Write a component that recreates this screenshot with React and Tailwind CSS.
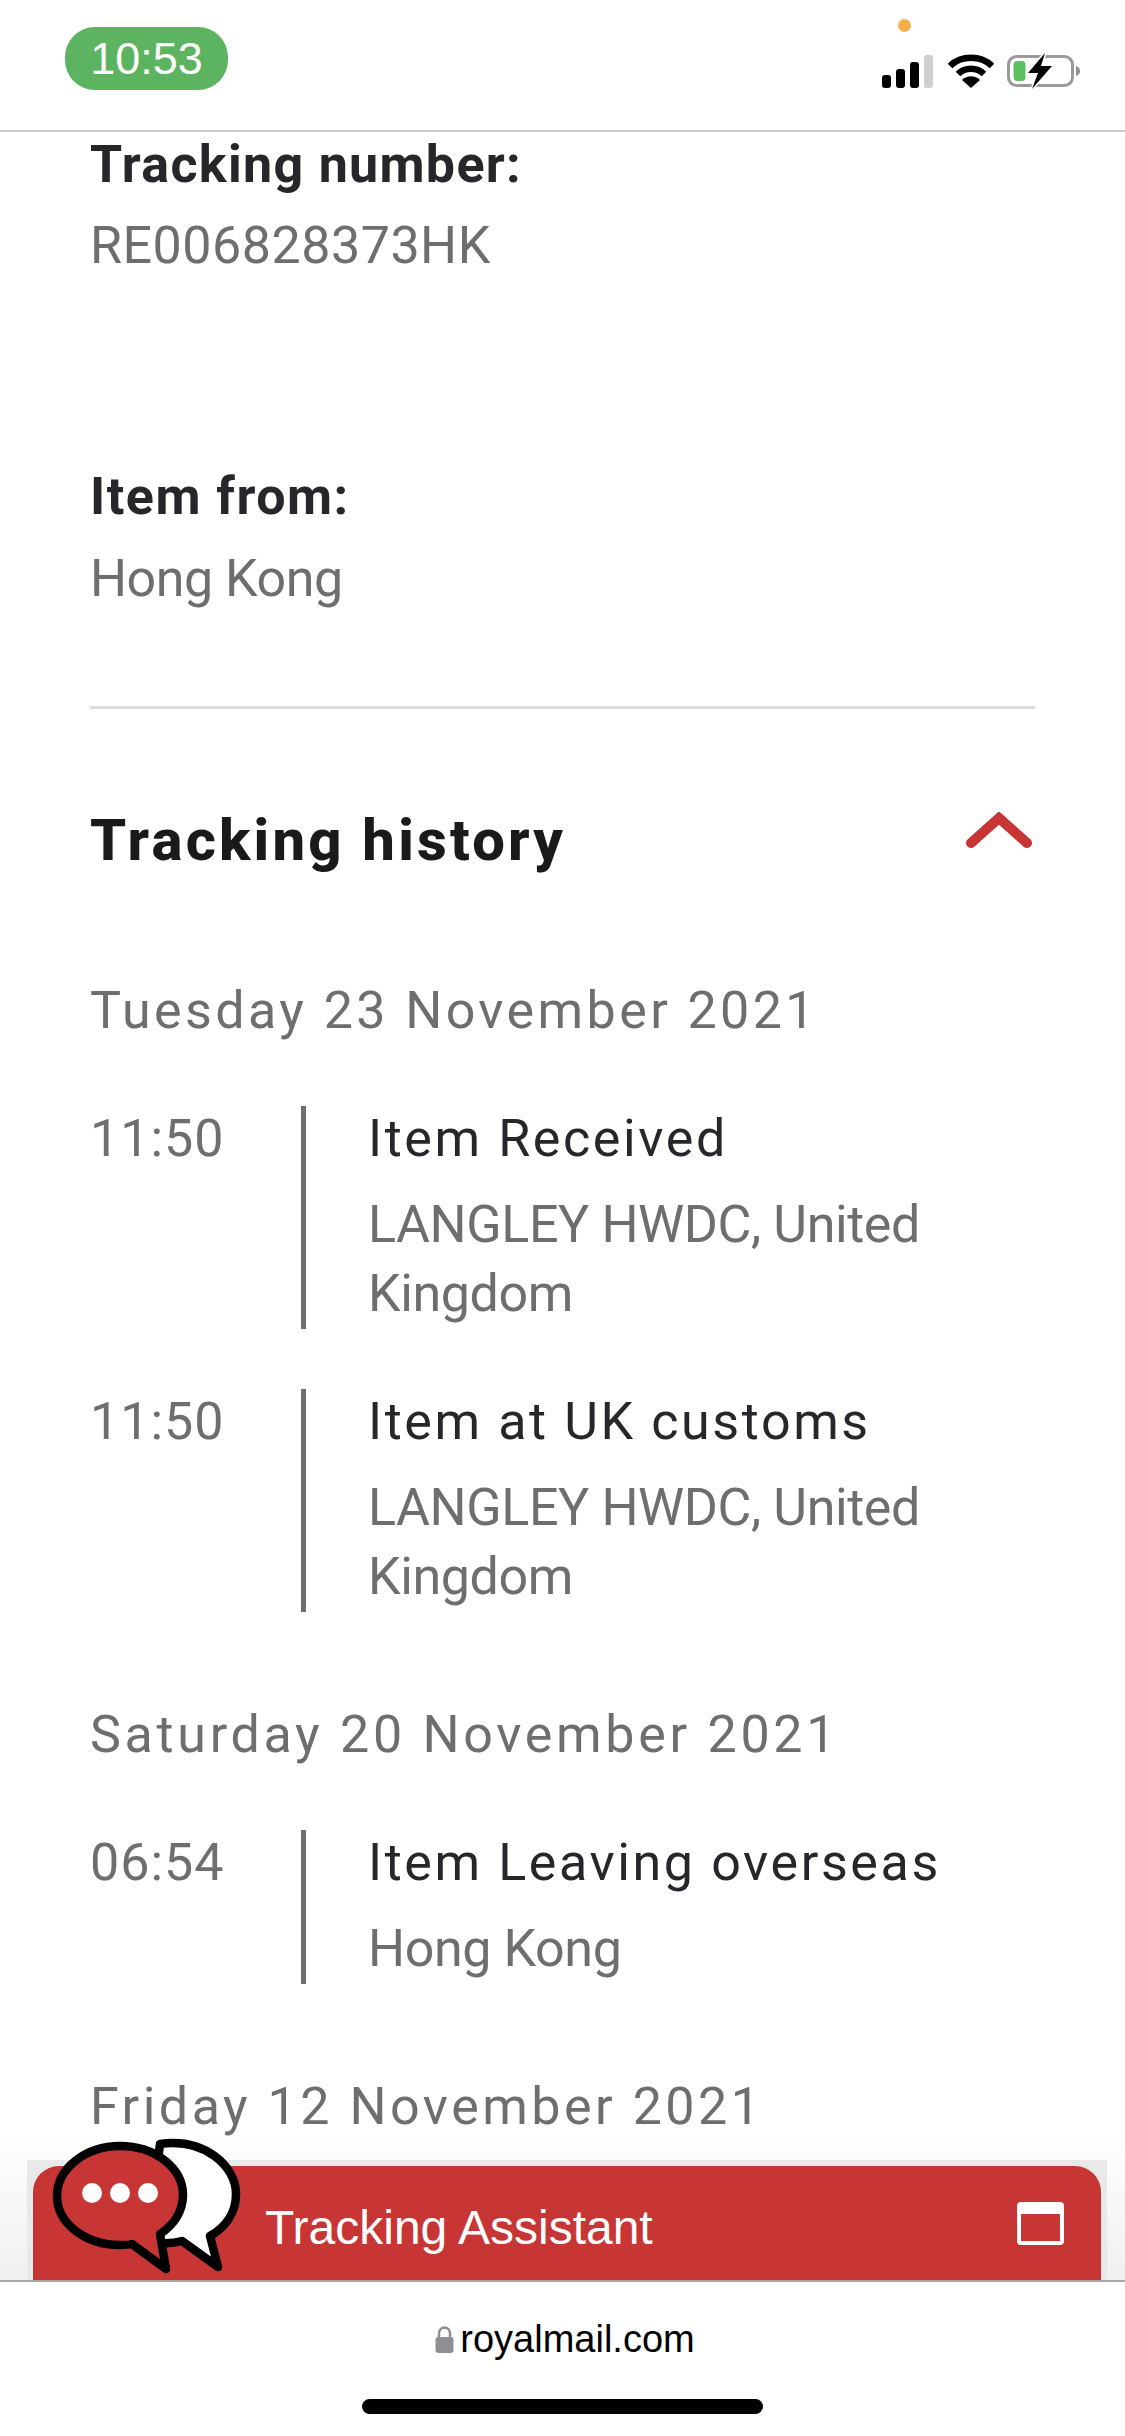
const font = { fontFamily: 'Roboto, "Open Sans", sans-serif' }

function Signal() {
  return (
    <svg width="53" height="33" viewBox="0 0 53 33">
      <rect x="0" y="20" width="9" height="13" rx="3" fill="#000" />
      <rect x="14" y="14" width="9" height="19" rx="3" fill="#000" />
      <rect x="28" y="7" width="9" height="26" rx="3" fill="#000" />
      <rect x="42" y="0" width="9" height="33" rx="3" fill="#cfcfcf" />
    </svg>
  )
}

function Wifi() {
  return (
    <svg width="46" height="34" viewBox="0 0 46 34">
      <path d="M2 12C13 1 33 1 44 12" fill="none" stroke="#000" strokeWidth="6.500" strokeLinecap="butt" />
      <path d="M10 20C17 13 29 13 36 20" fill="none" stroke="#000" strokeWidth="6.500" />
      <path d="M14 26C19 21 27 21 32 26L23 34Z" fill="#000" />
    </svg>
  )
}

function Battery() {
  return (
    <svg width="74" height="36" viewBox="0 0 74 36">
      <rect x="1.500" y="3.500" width="64" height="29" rx="8" fill="none" stroke="#9a9a9a" strokeWidth="3" />
      <path d="M69 13c3 1 4 3 4 5s-1 4-4 5z" fill="#8e8e8e" />
      <rect x="6.500" y="8" width="12" height="20" rx="4" fill="#5ac15c" />
      <path d="M38 0 21 20h10l-6 16 20-23H34z" fill="#000" stroke="#fff" strokeWidth="3" paintOrder="stroke" />
    </svg>
  )
}

function ChatIcon() {
  return (
    <svg width="195" height="140" viewBox="30 58 195 140" className="absolute left-[23px] top-[-22px]">
      <path
        d="M140 64c45-6 76 22 76 50 0 20-12 34-26 42l8 31-36-26c-10 3-22 3-34 0z"
        fill="#fff" stroke="#000" strokeWidth="8.500" strokeLinejoin="round"
      />
      <path
        d="M100 66c35 0 63 22 63 49 0 16-9 30-23 39l6 35-34-25c-4 1-8 1-12 1-35 0-63-22-63-49s28-50 63-50z"
        fill="#c73534" stroke="#000" strokeWidth="8.500" strokeLinejoin="round"
      />
      <circle cx="72" cy="113" r="10" fill="#fff" />
      <circle cx="100" cy="113" r="10" fill="#fff" />
      <circle cx="128" cy="113" r="10" fill="#fff" />
    </svg>
  )
}

const days = [
  {
    date: 'Tuesday 23 November 2021',
    events: [
      { time: '11:50', title: 'Item Received', place: 'LANGLEY HWDC, United Kingdom' },
      { time: '11:50', title: 'Item at UK customs', place: 'LANGLEY HWDC, United Kingdom' },
    ],
  },
  {
    date: 'Saturday 20 November 2021',
    events: [{ time: '06:54', title: 'Item Leaving overseas', place: 'Hong Kong' }],
  },
]

function Event({ time, title, place }) {
  return (
    <div className="flex">
      <div className="w-[211px] shrink-0 text-[52px] leading-[66px] tracking-[1px] text-[#6e6e6e]">{time}</div>
      <div className="w-[5px] shrink-0 bg-[#6e6e6e]" />
      <div className="pl-[62px] w-[690px] pb-[1px]">
        <div className="text-[52px] leading-[66px] tracking-[2.600px] text-[#26262b]">{title}</div>
        <div className="mt-[18px] text-[52px] leading-[69px] tracking-[-0.400px] text-[#6e6e6e]">{place}</div>
      </div>
    </div>
  )
}

export default function App() {
  return (
    <div className="w-[1125px] h-[2436px] flex flex-col overflow-hidden bg-white" style={font}>
      {/* Status bar */}
      <header className="relative h-[132px] shrink-0 border-b-2 border-[#cfcfcf] flex justify-between items-start px-[65px] pt-[27px]">
        <div className="w-[163px] h-[63px] rounded-[30px] bg-[#5cb461] text-white text-[45px] flex items-center justify-center" style={{ fontFamily: '"Liberation Sans", sans-serif' }}>
          10:53
        </div>
        <div className="absolute left-[898px] top-[19px] w-[13px] h-[13px] rounded-full bg-[#f6ae4a]" />
        <div className="flex items-center gap-[13px] mt-[26px] mr-[-21px]">
          <Signal />
          <Wifi />
          <Battery />
        </div>
      </header>

      {/* Page content */}
      <main className="relative flex-1 min-h-0 overflow-hidden px-[90px]">
        <h3 className="mt-[-2px] text-[52px] leading-[70px] font-bold tracking-[1.300px] text-[#26262b]">Tracking number:</h3>
        <p className="mt-[11px] text-[52px] leading-[70px] tracking-[0.500px] text-[#6e6e6e]">RE006828373HK</p>
        <h3 className="mt-[181px] text-[52px] leading-[70px] font-bold tracking-[1.500px] text-[#26262b]">Item from:</h3>
        <p className="mt-[12px] text-[52px] leading-[70px] tracking-[-0.500px] text-[#6e6e6e]">Hong Kong</p>
        <div className="mt-[92px] h-[3px] bg-[#dcdcdc]" />

        <div className="mt-[92px] flex items-center justify-between">
          <h2 className="text-[58px] leading-[78px] font-extrabold tracking-[3.200px] text-[#1a1a1a]">Tracking history</h2>
          <svg width="66" height="36" viewBox="0 0 66 36" className="mb-[20px] mr-[3px]">
            <path d="M5 31 33 6l28 25" fill="none" stroke="#c73534" strokeWidth="10" strokeLinecap="round" />
          </svg>
        </div>

        {days.map((day, i) => (
          <section key={day.date} className={i === 0 ? 'mt-[97px]' : 'mt-[88px]'}>
            <h4 className={`text-[52px] leading-[70px] text-[#6e6e6e] ${i === 0 ? 'tracking-[3.400px]' : 'tracking-[3.700px]'}`}>{day.date}</h4>
            <div className="mt-[60px] flex flex-col gap-[60px]">
              {day.events.map((ev, j) => (
                <Event key={j} {...ev} />
              ))}
            </div>
          </section>
        ))}
        <h4 className="mt-[88px] text-[52px] leading-[70px] tracking-[3.500px] text-[#6e6e6e]">Friday 12 November 2021</h4>

        {/* Chat widget sits over the page */}
        <div className="absolute left-0 right-0 bottom-0 h-[150px] bg-gradient-to-b from-white/0 to-[#ececec]/80" />
        <div className="absolute left-[27px] w-[1080px] bottom-0 h-[120px] bg-[#e9e9e9] px-[6px] pt-[6px]">
          <div className="h-full rounded-t-[26px] bg-[#c73534] flex items-center justify-between pl-[232px] pr-[37px]">
            <span className="mt-[10px] text-[48px] text-white" style={{ fontFamily: '"Liberation Sans", sans-serif' }}>Tracking Assistant</span>
            <div className="w-[47px] h-[43px] rounded-[4px] bg-white pt-[12px] px-[4px] pb-[4px]">
              <div className="w-full h-full bg-[#c73534]" />
            </div>
          </div>
          <ChatIcon />
        </div>
      </main>

      {/* Browser bar */}
      <footer className="h-[156px] shrink-0 border-t-2 border-[#a8a8a8] bg-white flex flex-col items-center">
        <div className="mt-[34px] ml-[5px] flex items-center gap-[6px] text-[38px] leading-[46px] text-black" style={{ fontFamily: '"Liberation Sans", sans-serif' }}>
          <svg width="19" height="28" viewBox="0 0 19 28">
            <path d="M4 13V8a5.500 5.500 0 0 1 11 0v5" fill="none" stroke="#8e8e93" strokeWidth="2.500" />
            <rect x="0.500" y="12" width="18" height="16" rx="3" fill="#8e8e93" />
          </svg>
          royalmail.com
        </div>
        <div className="mt-[37px] w-[401px] h-[15px] rounded-full bg-black" />
      </footer>
    </div>
  )
}
